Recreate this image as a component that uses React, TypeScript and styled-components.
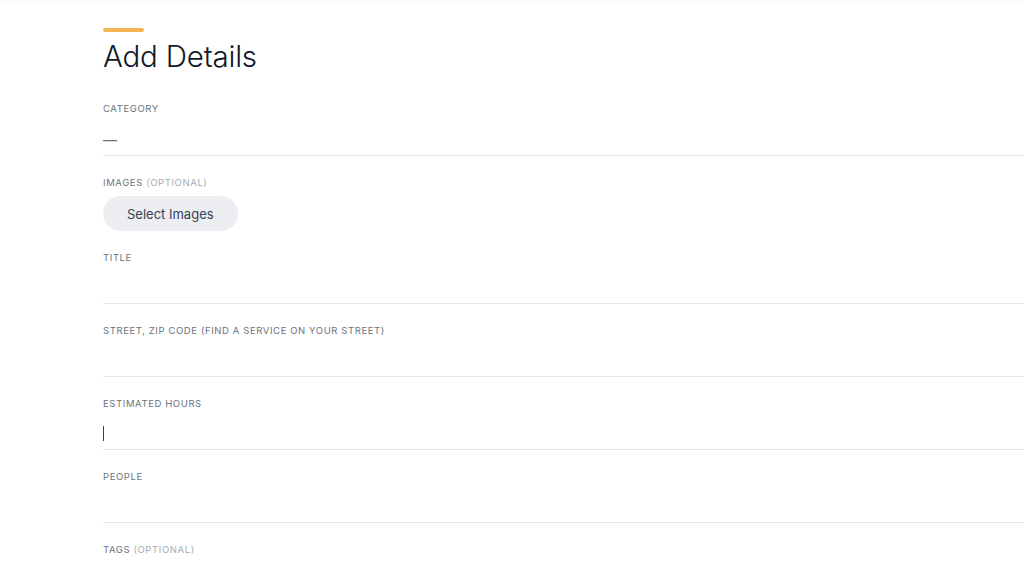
import { createGlobalStyle, styled } from "styled-components";

const GlobalStyle = createGlobalStyle`
  html, body {
    margin: 0;
    padding: 0;
    background: #ffffff;
    font-family: Inter, "Noto Sans", sans-serif;
    color: #111827;
  }
  * {
    box-sizing: border-box;
  }
`;

interface FieldDef {
  label: string;
  optional?: boolean;
  kind: "text" | "select" | "images" | "focused";
}

const fields: FieldDef[] = [
  { label: "Category", kind: "select" },
  { label: "Images", optional: true, kind: "images" },
  { label: "Title", kind: "text" },
  { label: "Street, zip code (find a service on your street)", kind: "text" },
  { label: "Estimated hours", kind: "focused" },
  { label: "People", kind: "text" },
  { label: "Tags", optional: true, kind: "text" },
];

export default function App() {
  return (
    <>
      <GlobalStyle />
      <TopBand />
      <Page>
        <Accent />
        <Heading>Add Details</Heading>
        <Form>
          {fields.map((f) => (
            <Field key={f.label}>
              <Label>
                {f.label}
                {f.optional && <Optional> (optional)</Optional>}
              </Label>
              {f.kind === "images" ? (
                <SelectButton type="button">Select Images</SelectButton>
              ) : (
                <InputArea $tall={f.kind === "select"}>
                  {f.kind === "select" && <Placeholder>—</Placeholder>}
                  {f.kind === "focused" && <Caret />}
                </InputArea>
              )}
            </Field>
          ))}
        </Form>
      </Page>
    </>
  );
}

const TopBand = styled.div`
  height: 3px;
  background: #f9fafa;
`;

const Page = styled.main`
  padding: 25px 0 0 103px;
`;

const Accent = styled.div`
  width: 41px;
  height: 4px;
  border-radius: 2px;
  background: #f5b453;
`;

const Heading = styled.h1`
  margin: 4px 0 0;
  font-size: 29.5px;
  line-height: 40px;
  font-weight: 300;
  color: #111827;
  letter-spacing: -0.2px;
`;

const Form = styled.div`
  display: flex;
  flex-direction: column;
  gap: 21px;
  margin-top: 27px;
`;

const Field = styled.div`
  display: flex;
  flex-direction: column;
`;

const Label = styled.label`
  font-size: 9.5px;
  line-height: 12px;
  letter-spacing: 0.6px;
  text-transform: uppercase;
  color: #6b7280;
`;

const Optional = styled.span`
  color: #a4abb5;
`;

const InputArea = styled.div<{ $tall?: boolean }>`
  display: flex;
  align-items: center;
  height: ${(p) => (p.$tall ? "41px" : "40px")};
  padding-top: 8px;
  border-bottom: 1px solid #e5e7eb;
`;

const Placeholder = styled.span`
  font-size: 14px;
  color: #6b7280;
`;

const Caret = styled.span`
  width: 1px;
  height: 15px;
  background: #374151;
`;

const SelectButton = styled.button`
  align-self: flex-start;
  margin-top: 7px;
  height: 35px;
  padding: 0 24px;
  border: none;
  border-radius: 18px;
  background: #eceef2;
  font-family: Inter, "Noto Sans", sans-serif;
  font-size: 13px;
  color: #374151;
`;
